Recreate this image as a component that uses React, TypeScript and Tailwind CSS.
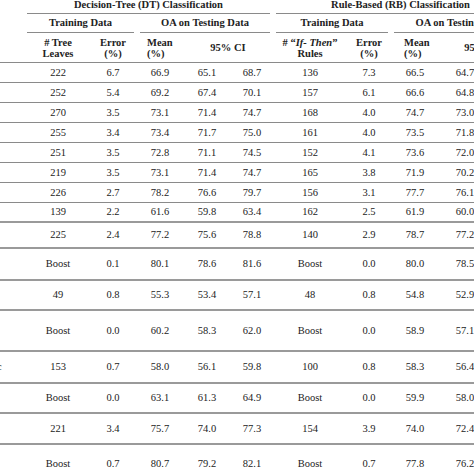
import React from 'react'

const dt = [
  ['222', '6.7', '66.9', '65.1', '68.7'],
  ['252', '5.4', '69.2', '67.4', '70.1'],
  ['270', '3.5', '73.1', '71.4', '74.7'],
  ['255', '3.4', '73.4', '71.7', '75.0'],
  ['251', '3.5', '72.8', '71.1', '74.5'],
  ['219', '3.5', '73.1', '71.4', '74.7'],
  ['226', '2.7', '78.2', '76.6', '79.7'],
  ['139', '2.2', '61.6', '59.8', '63.4'],
  ['225', '2.4', '77.2', '75.6', '78.8'],
  ['Boost', '0.1', '80.1', '78.6', '81.6'],
  ['49', '0.8', '55.3', '53.4', '57.1'],
  ['Boost', '0.0', '60.2', '58.3', '62.0'],
  ['153', '0.7', '58.0', '56.1', '59.8'],
  ['Boost', '0.0', '63.1', '61.3', '64.9'],
  ['221', '3.4', '75.7', '74.0', '77.3'],
  ['Boost', '0.7', '80.7', '79.2', '82.1'],
]

const rb = [
  ['136', '7.3', '66.5', '64.7', '68.3'],
  ['157', '6.1', '66.6', '64.8', '68.4'],
  ['168', '4.0', '74.7', '73.0', '76.4'],
  ['161', '4.0', '73.5', '71.8', '75.2'],
  ['152', '4.1', '73.6', '72.0', '75.2'],
  ['165', '3.8', '71.9', '70.2', '73.6'],
  ['156', '3.1', '77.7', '76.1', '79.3'],
  ['162', '2.5', '61.9', '60.0', '63.8'],
  ['140', '2.9', '78.7', '77.2', '80.2'],
  ['Boost', '0.0', '80.0', '78.5', '81.5'],
  ['48', '0.8', '54.8', '52.9', '56.7'],
  ['Boost', '0.0', '58.9', '57.1', '60.7'],
  ['100', '0.8', '58.3', '56.4', '60.2'],
  ['Boost', '0.0', '59.9', '58.0', '61.8'],
  ['154', '3.9', '74.0', '72.4', '75.6'],
  ['Boost', '0.7', '77.8', '76.2', '79.4'],
]

// row heights follow the scan: eight plain rows, then the taller grouped ones
const heights = [
  'h-[20px] border-b border-[#8a8a8a]',
  'h-[20px] border-b border-[#8a8a8a]',
  'h-[20px] border-b border-[#8a8a8a]',
  'h-[20px] border-b border-[#8a8a8a]',
  'h-[20px] border-b border-[#8a8a8a]',
  'h-[20px] border-b border-[#8a8a8a]',
  'h-[20px] border-b border-[#8a8a8a]',
  'h-[20px] border-b-2 border-[#9a9a9a]',
  'h-[26px] border-b-2 border-[#9a9a9a]',
  'h-[32px] border-b-2 border-[#9a9a9a]',
  'h-[30px] border-b-2 border-[#9a9a9a]',
  'h-[41px] border-b-2 border-[#9a9a9a]',
  'h-[32px] border-b-2 border-[#9a9a9a]',
  'h-[30px] border-b-2 border-[#9a9a9a]',
  'h-[31px] border-b-2 border-[#9a9a9a]',
  'h-[40px] border-b-2 border-[#9a9a9a]',
]

const grid = 'grid grid-cols-[27px_62px_48px_46px_48px_42px_74px_44px_48px_52px_34px]'

export default function App() {
  return (
    <div
      className="w-[474px] h-[474px] overflow-hidden bg-white text-[#222] text-[10.5px]"
      style={{ fontFamily: '"Liberation Serif", "DejaVu Serif", serif' }}
    >
      <div className="w-[525px]">
        {/* group titles */}
        <div className={`${grid} h-[14px] font-bold leading-[10px]`}>
          <div />
          <div className="col-span-5 text-center border-b border-[#8a8a8a] mr-[3px]">
            Decision-Tree (DT) Classification
          </div>
          <div className="col-span-5 text-center border-b border-[#8a8a8a] ml-[3px]">
            Rule-Based (RB) Classification
          </div>
        </div>

        <div className={`${grid} h-[19px] font-bold items-stretch`}>
          <div />
          <div className="col-span-2 flex items-center justify-center border-b border-[#8a8a8a] mr-[3px]">
            Training Data
          </div>
          <div className="col-span-3 flex items-center justify-center border-b border-[#8a8a8a] ml-[3px] mr-[3px]">
            OA on Testing Data
          </div>
          <div className="col-span-2 flex items-center justify-center border-b border-[#8a8a8a] ml-[3px] mr-[3px]">
            Training Data
          </div>
          <div className="col-span-3 flex items-center justify-center border-b border-[#8a8a8a] ml-[3px]">
            OA on Testing Data
          </div>
        </div>

        <div className={`${grid} h-[30px] font-bold leading-[11px] items-center border-b border-[#8a8a8a]`}>
          <div />
          <div className="text-center">
            # Tree
            <br />
            Leaves
          </div>
          <div className="text-center">
            Error
            <br />
            (%)
          </div>
          <div className="pl-[10px]">
            Mean
            <br />
            (%)
          </div>
          <div className="col-span-2 text-center">95% CI</div>
          <div className="text-center">
            # “<i>If- Then</i>”
            <br />
            Rules
          </div>
          <div className="text-center">
            Error
            <br />
            (%)
          </div>
          <div className="pl-[13px]">
            Mean
            <br />
            (%)
          </div>
          <div className="col-span-2 text-center">95% CI</div>
        </div>

        {dt.map((d, i) => (
          <div key={i} className={`${grid} items-center ${heights[i]}`}>
            <div className="overflow-hidden whitespace-nowrap">
              {i === 12 && <span className="-ml-[3px]">c</span>}
            </div>
            {d.map((v, j) => (
              <div key={j} className="text-center">
                {v}
              </div>
            ))}
            {rb[i].map((v, j) => (
              <div key={j} className="text-center">
                {v}
              </div>
            ))}
          </div>
        ))}
      </div>
    </div>
  )
}
